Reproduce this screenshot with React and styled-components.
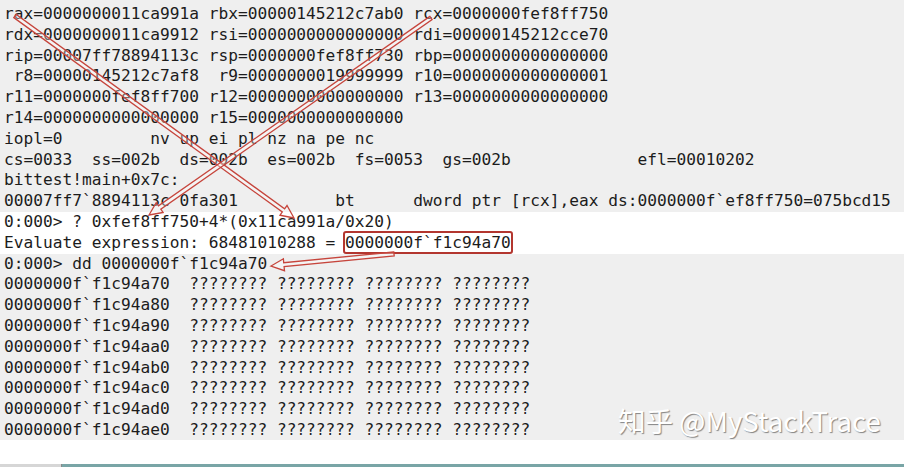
import styled, { createGlobalStyle } from 'styled-components';

const GlobalStyle = createGlobalStyle`
  html, body {
    margin: 0;
    padding: 0;
    background: #ffffff;
  }
  #root {
    width: 904px;
    height: 467px;
    overflow: hidden;
  }
`;

const Page = styled.div`
  position: relative;
  width: 904px;
  height: 467px;
  display: flex;
  flex-direction: column;
  background: #ffffff;
`;

const Console = styled.div`
  height: 440px;
  padding-top: 4px;
  box-sizing: border-box;
  background: #efefef;
  overflow: hidden;
  font-family: "DejaVu Sans Mono", "Liberation Mono", monospace;
  font-size: 16.2px;
  color: #1c1c1c;
`;

const Line = styled.div`
  height: 20.8px;
  line-height: 20.8px;
  padding-left: 4px;
  white-space: pre;
  background: ${(p) => (p.$cmd ? '#ffffff' : 'transparent')};
`;

const Boxed = styled.span`
  outline: 2px solid #b3362f;
  outline-offset: 0px;
  border-radius: 1px;
`;

const Footer = styled.div`
  margin-top: auto;
  height: 3px;
  display: flex;
`;

const FooterPart = styled.div`
  width: ${(p) => p.$w || 'auto'};
  flex: ${(p) => (p.$w ? 'none' : '1')};
  background: ${(p) => p.$c};
  border-right: ${(p) => (p.$sep ? '1px solid #8a8a8a' : 'none')};
`;

const Overlay = styled.svg`
  position: absolute;
  left: 0;
  top: 0;
  pointer-events: none;
`;

const Watermark = styled.div`
  position: absolute;
  left: 618px;
  top: 400px;
  font-family: "Noto Sans CJK SC", "Noto Sans", sans-serif;
  font-size: 27.6px;
  color: #ffffff;
  text-shadow: 1px 1px 1px rgba(0, 0, 0, 0.45);
  white-space: nowrap;
`;

const lines = [
  'rax=0000000011ca991a rbx=00000145212c7ab0 rcx=0000000fef8ff750',
  'rdx=0000000011ca9912 rsi=0000000000000000 rdi=00000145212cce70',
  'rip=00007ff78894113c rsp=0000000fef8ff730 rbp=0000000000000000',
  ' r8=00000145212c7af8  r9=0000000019999999 r10=0000000000000001',
  'r11=0000000fef8ff700 r12=0000000000000000 r13=0000000000000000',
  'r14=0000000000000000 r15=0000000000000000',
  'iopl=0         nv up ei pl nz na pe nc',
  'cs=0033  ss=002b  ds=002b  es=002b  fs=0053  gs=002b             efl=00010202',
  'bittest!main+0x7c:',
  '00007ff7`8894113c 0fa301          bt      dword ptr [rcx],eax ds:0000000f`ef8ff750=075bcd15',
];

const dumpRows = ['a70', 'a80', 'a90', 'aa0', 'ab0', 'ac0', 'ad0', 'ae0'];

const arrowPoints = (x1, y1, x2, y2, sw = 2, hl = 13, hw = 6) => {
  const dx = x2 - x1;
  const dy = y2 - y1;
  const len = Math.hypot(dx, dy);
  const ux = dx / len;
  const uy = dy / len;
  const nx = -uy;
  const ny = ux;
  const bx = x2 - ux * hl;
  const by = y2 - uy * hl;
  const pts = [
    [x1 + nx * sw, y1 + ny * sw],
    [bx + nx * sw, by + ny * sw],
    [bx + nx * hw, by + ny * hw],
    [x2, y2],
    [bx - nx * hw, by - ny * hw],
    [bx - nx * sw, by - ny * sw],
    [x1 - nx * sw, y1 - ny * sw],
  ];
  return pts.map((p) => p.map((v) => v.toFixed(1)).join(',')).join(' ');
};

const arrows = [
  [15, 16, 294, 218],
  [431, 18, 149, 215],
  [394, 254, 271, 266],
];

export default function App() {
  return (
    <>
      <GlobalStyle />
      <Page>
        <Console>
          {lines.map((l, i) => (
            <Line key={i}>{l}</Line>
          ))}
          <Line $cmd>0:000&gt; ? 0xfef8ff750+4*(0x11ca991a/0x20)</Line>
          <Line $cmd>
            Evaluate expression: 68481010288 = <Boxed>0000000f`f1c94a70</Boxed>
          </Line>
          <Line>0:000&gt; dd 0000000f`f1c94a70</Line>
          {dumpRows.map((r) => (
            <Line key={r}>{`0000000f\`f1c94${r}  ???????? ???????? ???????? ????????`}</Line>
          ))}
        </Console>
        <Footer>
          <FooterPart $w="61px" $c="#d6d6d6" $sep />
          <FooterPart $c="#79a5a6" />
        </Footer>
        <Overlay width="904" height="467" viewBox="0 0 904 467">
          {arrows.map((a, i) => (
            <polygon
              key={i}
              points={arrowPoints(...a)}
              fill="rgba(255,255,255,0.35)"
              stroke="#c6453c"
              strokeWidth="1.3"
              strokeLinejoin="miter"
            />
          ))}
        </Overlay>
        <Watermark>知乎 @MyStackTrace</Watermark>
      </Page>
    </>
  );
}
